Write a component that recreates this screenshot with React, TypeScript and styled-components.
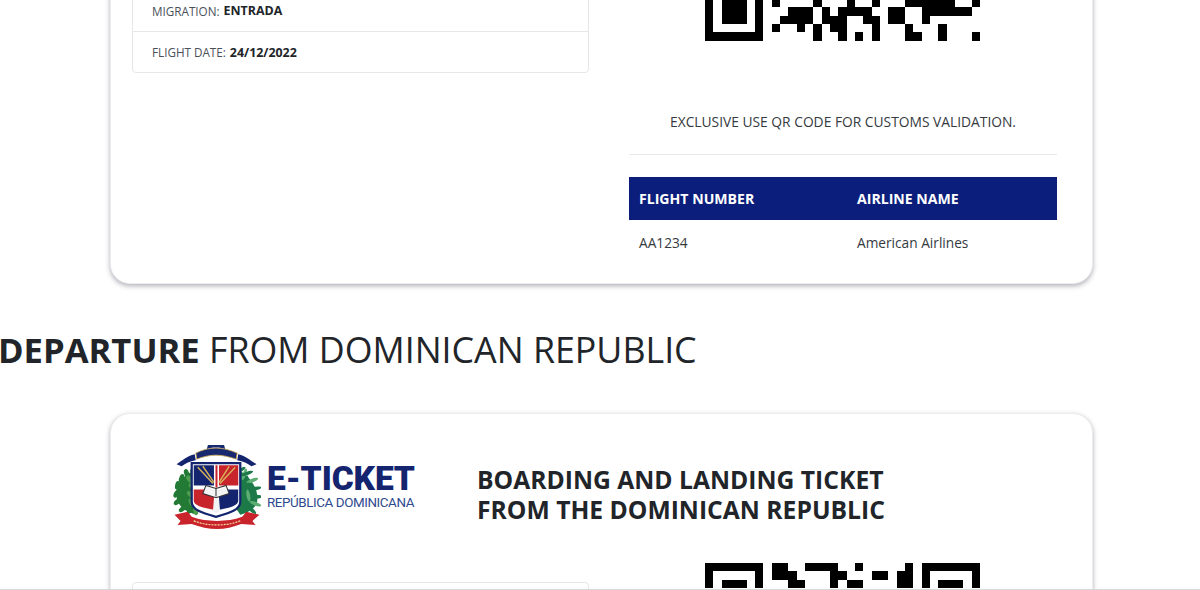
import React from 'react';
import styled, { createGlobalStyle } from 'styled-components';

const GlobalStyle = createGlobalStyle`
  html, body {
    margin: 0;
    padding: 0;
    background: #fff;
  }
  body {
    font-family: 'Open Sans', 'Noto Sans', sans-serif;
    color: #212529;
  }
`;

const Frame = styled.div`
  box-sizing: border-box;
  width: 1200px;
  height: 590px;
  overflow: hidden;
  border-bottom: 1px solid #d9d9d9;
`;

const Page = styled.main`
  display: flex;
  flex-direction: column;
  margin-top: -32px;
`;

const Card = styled.section`
  box-sizing: border-box;
  width: 983px;
  margin-left: 110px;
  padding: 20px 36px 18px 21px;
  background: #fff;
  border-radius: 20px;
  border: 1px solid #ececee;
  box-shadow: 0 2px 5px rgba(50, 50, 70, 0.38);
`;

const SecondCard = styled(Card)`
  padding-top: 29px;
  padding-bottom: 40px;
`;

const Heading = styled.h2`
  margin: 44px 0 42px -2px;
  font-size: 35.75px;
  line-height: 42px;
  font-weight: 400;
  white-space: nowrap;
  color: #212529;

  b {
    font-size: 34.6px;
    font-weight: 700;
  }
`;

const Columns = styled.div`
  display: grid;
  grid-template-columns: 457px 428px;
  column-gap: 40px;
  align-items: start;
`;

const InfoList = styled.ul<{ $offset?: number }>`
  margin: ${({ $offset }) => $offset ?? 0}px 0 0;
  padding: 0;
  list-style: none;
  border: 1px solid #e6e7e9;
  border-radius: 4px;
  min-height: 30px;
`;

const InfoRow = styled.li`
  box-sizing: border-box;
  height: 41px;
  padding-left: 19px;
  display: flex;
  align-items: center;
  gap: 4px;
  font-size: 11.7px;
  color: #495057;
  text-transform: uppercase;

  & + & {
    border-top: 1px solid #e6e7e9;
  }

  b {
    font-size: 12.4px;
    font-weight: 700;
    color: #212529;
  }
`;

const QrColumn = styled.div`
  display: flex;
  flex-direction: column;
`;

const QrBox = styled.svg<{ $offset?: number }>`
  display: block;
  width: 275px;
  margin: ${({ $offset }) => $offset ?? 0}px 0 0 76px;
  shape-rendering: crispEdges;
`;

const Caption = styled.p`
  margin: 71px 0 0;
  font-size: 13.8px;
  line-height: 20px;
  text-align: center;
  color: #343a40;
`;

const Divider = styled.hr`
  width: 100%;
  margin: 22px 0;
  border: 0;
  border-top: 1px solid #e9eaec;
`;

const FlightTable = styled.table`
  width: 428px;
  border-collapse: collapse;
  font-size: 13.7px;
  table-layout: fixed;

  th {
    height: 43px;
    padding: 0 10px;
    background: #0b1e7c;
    color: #fff;
    font-size: 14.1px;
    font-weight: 700;
    text-align: left;
  }

  th:first-child {
    width: 198px;
  }

  td {
    height: 45px;
    padding: 0 10px;
    color: #343a40;
  }
`;

const TicketHeader = styled.header`
  display: flex;
  align-items: center;
  padding-left: 41px;
  height: 87px;
  margin-bottom: 33px;
`;

const Seal = styled.svg`
  display: block;
  width: 88px;
  height: 87px;
  flex: none;
`;

const Brand = styled.div`
  display: flex;
  flex-direction: column;
  margin: 0 0 1px 6px;
  width: 150px;
`;

const BrandName = styled.span`
  font-family: 'Roboto', 'Liberation Sans', sans-serif;
  font-size: 33.5px;
  line-height: 34px;
  font-weight: 900;
  color: #14246f;
  letter-spacing: -0.1px;
  white-space: nowrap;
`;

const BrandSub = styled.span`
  font-family: 'Roboto', 'Liberation Sans', sans-serif;
  font-size: 13.4px;
  line-height: 14px;
  letter-spacing: -0.42px;
  color: #2f4a8f;
  white-space: nowrap;
`;

const TicketTitle = styled.h1`
  margin: 18px 0 0 60px;
  font-size: 24.68px;
  line-height: 30px;
  font-weight: 700;
  white-space: nowrap;
  color: #212529;
`;

const QrCode: React.FC<{ rows: string[]; offset?: number }> = ({ rows, offset }) => (
  <QrBox $offset={offset} viewBox={`0 0 33 ${rows.length}`} height={(rows.length * 25) / 3}>
    {rows.map((row, y) =>
      row.split('').map((cell, x) =>
        cell === '#' ? <rect key={`${x}-${y}`} x={x} y={y} width="1" height="1" fill="#000" /> : null
      )
    )}
  </QrBox>
);

const topQr = [
  '#.###.#.#....#...#..#...######..#',
  '#.###.#...###.#.####..##..######.',
  '#.###.#..####.###..##.##..#......',
  '#.....#.#..#.#.##...#...#...#....',
  '#######......#..#.#.#...##..#...#',
];

const bottomQr = [
  '#######.##..####..#.....#.#######',
  '#.....#.###....##...##.##.#.....#',
  '#.###.#...##...#.##....##.#.###.#',
];

// [x, y, rotation] of each leaf on the two branches of the seal
const laurelLeaves = [
  [24, 32, -50], [17, 33, -20], [12, 38, 20], [20, 39, -40], [8, 45, 10], [15, 45, -30],
  [23, 46, -60], [7, 53, 30], [14, 53, -10], [21, 54, -50], [8, 61, 50], [15, 61, 10],
  [22, 62, -30], [13, 68, 50], [20, 69, 20], [26, 70, -10],
];
const palmLeaves = [
  [70, 30, 60], [74, 34, 20], [77, 33, 70], [76, 41, 10], [82, 40, 70], [78, 48, 0],
  [85, 48, 80], [78, 55, -10], [86, 56, 90], [76, 62, -25], [85, 63, 110], [72, 68, -45],
  [81, 69, 130],
];

const DominicanSeal: React.FC = () => (
  <Seal viewBox="4 3 86 86">
    {/* branches behind the shield */}
    <path d="M26 30C14 33 7 44 7 55c0 9 8 16 20 19l3-6V30z" fill="#237a35" />
    <path d="M68 30c9 4 19 15 19 28 0 7-6 13-17 16l-4-6V30z" fill="#1d7a48" />
    {laurelLeaves.map(([x, y, r], i) => (
      <ellipse
        key={i}
        cx={x}
        cy={y}
        rx="2.4"
        ry="4.4"
        transform={`rotate(${r} ${x} ${y})`}
        fill={i % 3 === 0 ? '#4f9e4f' : '#237a35'}
      />
    ))}
    {palmLeaves.map(([x, y, r], i) => (
      <ellipse
        key={i}
        cx={x}
        cy={y}
        rx="1.8"
        ry="6"
        transform={`rotate(${r} ${x} ${y})`}
        fill={i % 3 === 1 ? '#5cae72' : '#1d7a48'}
      />
    ))}
    {/* shield */}
    <path d="M22 23h48v38c0 8-10 11-24 15-14-4-24-7-24-15z" fill="#fff" />
    <path d="M24 25h20v20H24z" fill="#14246f" />
    <path d="M49 25h19v20H49z" fill="#c8242c" />
    <path d="M24 49h20v20c-10-2-20-4-20-9z" fill="#c8242c" />
    <path d="M49 49h19v11c0 5-9 7-19 9z" fill="#14246f" />
    <path d="M22 23h48v38c0 8-10 11-24 15-14-4-24-7-24-15z" fill="none" stroke="#14246f" strokeWidth="2.2" />
    {/* lances and flags */}
    <path d="M28 27l15 16M33 26l11 16M65 27L50 43M59 26L49 42" stroke="#d8b25a" strokeWidth="1.4" fill="none" />
    <path d="M46.5 25v22" stroke="#c8242c" strokeWidth="2" />
    {/* bible */}
    <path d="M36 45l10 3 10-3 3 8-13 4-13-4z" fill="#f4f4f4" stroke="#333" strokeWidth="1" />
    <path d="M46 48v8" stroke="#333" strokeWidth="1" />
    <path d="M44 58h5l1 12-4 3-3-3z" fill="#f2f2f2" />
    {/* top banner */}
    <path d="M7 24c6-4 10-8 18-10l1 6c-6 1-10 3-14 6z" fill="#14246f" />
    <path d="M86 24c-6-4-10-8-18-10l-1 6c6 1 10 3 14 6z" fill="#14246f" />
    <path d="M26 13c6-3 12-5 20-5s14 2 21 5l-1 6c-6-2-13-4-20-4s-14 2-19 4z" fill="#18296f" stroke="#d8b25a" strokeWidth="0.8" />
    <path d="M37 9c3-2 15-2 18 0l-1-4H38z" fill="#18296f" />
    {/* bottom ribbon */}
    <path d="M5 74l13-3 4 5c8 3 16 4 25 4s17-1 25-4l4-5 13 3-7 6 3 4-14-1c-8 3-16 5-24 5s-17-2-25-5l-14 1 3-4z" fill="#c9242b" />
    <path d="M24 80c8 3 15 4 23 4s15-1 23-4" fill="none" stroke="#f2d9a0" strokeWidth="1.2" strokeDasharray="2 1" />
  </Seal>
);

const App: React.FC = () => (
  <Frame>
    <GlobalStyle />
    <Page>
      <Card>
        <Columns>
          <InfoList>
            <InfoRow>
              Migration: <b>Entrada</b>
            </InfoRow>
            <InfoRow>
              Flight date: <b>24/12/2022</b>
            </InfoRow>
          </InfoList>
          <QrColumn>
            <QrCode rows={topQr} offset={10} />
            <Caption>EXCLUSIVE USE QR CODE FOR CUSTOMS VALIDATION.</Caption>
            <Divider />
            <FlightTable>
              <thead>
                <tr>
                  <th>FLIGHT NUMBER</th>
                  <th>AIRLINE NAME</th>
                </tr>
              </thead>
              <tbody>
                <tr>
                  <td>AA1234</td>
                  <td>American Airlines</td>
                </tr>
              </tbody>
            </FlightTable>
          </QrColumn>
        </Columns>
      </Card>

      <Heading>
        <b>DEPARTURE</b> FROM DOMINICAN REPUBLIC
      </Heading>

      <SecondCard>
        <TicketHeader>
          <DominicanSeal />
          <Brand>
            <BrandName>E-TICKET</BrandName>
            <BrandSub>REPÚBLICA DOMINICANA</BrandSub>
          </Brand>
          <TicketTitle>
            BOARDING AND LANDING TICKET
            <br />
            FROM THE DOMINICAN REPUBLIC
          </TicketTitle>
        </TicketHeader>
        <Columns>
          <InfoList $offset={19} />
          <QrColumn>
            <QrCode rows={bottomQr} />
          </QrColumn>
        </Columns>
      </SecondCard>
    </Page>
  </Frame>
);

export default App;
